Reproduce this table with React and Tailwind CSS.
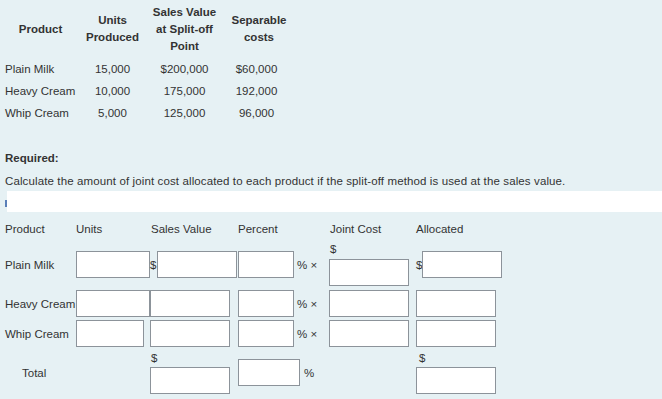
const ink = 'text-[#333333]';

function Box({ w }) {
  return <div className={`h-[27px] shrink-0 border border-[#8c939a] bg-white ${w}`} />;
}

const splitData = [
  { name: 'Plain Milk', units: '15,000', sales: '$200,000', sep: '$60,000' },
  { name: 'Heavy Cream', units: '10,000', sales: '175,000', sep: '192,000' },
  { name: 'Whip Cream', units: '5,000', sales: '125,000', sep: '96,000' },
];

export default function App() {
  return (
    <div
      className={`w-[662px] h-[399px] overflow-hidden bg-[#e6f1f4] text-[11.5px] leading-[14px] ${ink}`}
      style={{ fontFamily: '"Liberation Sans", Arial, sans-serif' }}
    >
      {/* given data */}
      <div className="flex items-center h-[52px] mt-[3px] font-bold leading-[17px] text-center">
        <div className="w-[81px]">Product</div>
        <div className="w-[63px]">Units<br />Produced</div>
        <div className="w-[81px]">Sales Value<br />at Split-off<br />Point</div>
        <div className="w-[68px]">Separable<br />costs</div>
      </div>
      <div className="mt-[3px]">
        {splitData.map(r => (
          <div key={r.name} className="flex items-center h-[22px] text-center">
            <div className="w-[81px] pl-[5px] text-left">{r.name}</div>
            <div className="w-[63px]">{r.units}</div>
            <div className="w-[81px]">{r.sales}</div>
            <div className="w-[63px]">{r.sep}</div>
          </div>
        ))}
      </div>

      <p className="mt-[27px] pl-[5px] font-bold">Required:</p>
      <p className="mt-[9px] pl-[5px] tracking-[0.12px]">
        Calculate the amount of joint cost allocated to each product if the split-off method is used at the sales value.
      </p>
      <div className="flex mt-[3px] pl-[5px]">
        <span className="w-[2px] h-[7px] mt-[9px] bg-[#5a7fb8]" />
        <div className="flex-1 h-[21px] bg-white" />
      </div>

      {/* answer grid */}
      <div className="flex pt-[10px]">
        <div className="w-[76px] pl-[5px]">Product</div>
        <div className="w-[74px]">Units</div>
        <div className="w-[88px] pl-px">Sales Value</div>
        <div className="w-[91px]">Percent</div>
        <div className="w-[87px] pl-px">Joint Cost</div>
        <div>Allocated</div>
      </div>

      <div className="flex items-start h-[52px]">
        <div className="w-[76px] pl-[5px] pt-[22px]">Plain Milk</div>
        <div className="w-[74px] pt-[15px]"><Box w="w-[74px]" /></div>
        <div className="w-[88px] pt-[15px] flex items-center">
          <span className="w-[7px]">$</span>
          <Box w="w-[80px]" />
        </div>
        <div className="w-[91px] pt-[15px] flex items-center">
          <Box w="w-[56px]" />
          <span className="ml-[3px]">% ×</span>
        </div>
        <div className="w-[87px] pt-[6px] flex flex-col">
          <span className="pl-px">$</span>
          <div className="mt-[3px]"><Box w="w-[80px]" /></div>
        </div>
        <div className="pt-[15px] flex items-center">
          <span className="w-[6px]">$</span>
          <Box w="w-[80px]" />
        </div>
      </div>

      <div className="flex items-center h-[27px] mt-[2px]">
        <div className="w-[76px] pl-[5px] whitespace-nowrap">Heavy Cream</div>
        <div className="w-[74px]"><Box w="w-[74px]" /></div>
        <div className="w-[88px]"><Box w="w-[80px]" /></div>
        <div className="w-[91px] flex items-center">
          <Box w="w-[56px]" />
          <span className="ml-[3px]">% ×</span>
        </div>
        <div className="w-[87px]"><Box w="w-[80px]" /></div>
        <Box w="w-[80px]" />
      </div>

      <div className="flex items-center h-[27px] mt-[3px]">
        <div className="w-[76px] pl-[5px] pt-px">Whip Cream</div>
        <div className="w-[74px]"><Box w="w-[68px]" /></div>
        <div className="w-[88px]"><Box w="w-[80px]" /></div>
        <div className="w-[91px] flex items-center">
          <Box w="w-[56px]" />
          <span className="ml-[3px]">% ×</span>
        </div>
        <div className="w-[87px]"><Box w="w-[80px]" /></div>
        <Box w="w-[80px]" />
      </div>

      <div className="flex items-start">
        <div className="w-[76px] pl-[22px] pt-[19px]">Total</div>
        <div className="w-[74px]" />
        <div className="w-[88px] pt-[4px] flex flex-col">
          <span className="pl-px">$</span>
          <div className="mt-[2px]"><Box w="w-[80px]" /></div>
        </div>
        <div className="w-[91px] pt-[12px] flex items-center">
          <Box w="w-[62px]" />
          <span className="ml-[4px]">%</span>
        </div>
        <div className="w-[87px]" />
        <div className="pt-[4px] flex flex-col">
          <span className="pl-[3px]">$</span>
          <div className="mt-[2px]"><Box w="w-[80px]" /></div>
        </div>
      </div>
    </div>
  );
}
